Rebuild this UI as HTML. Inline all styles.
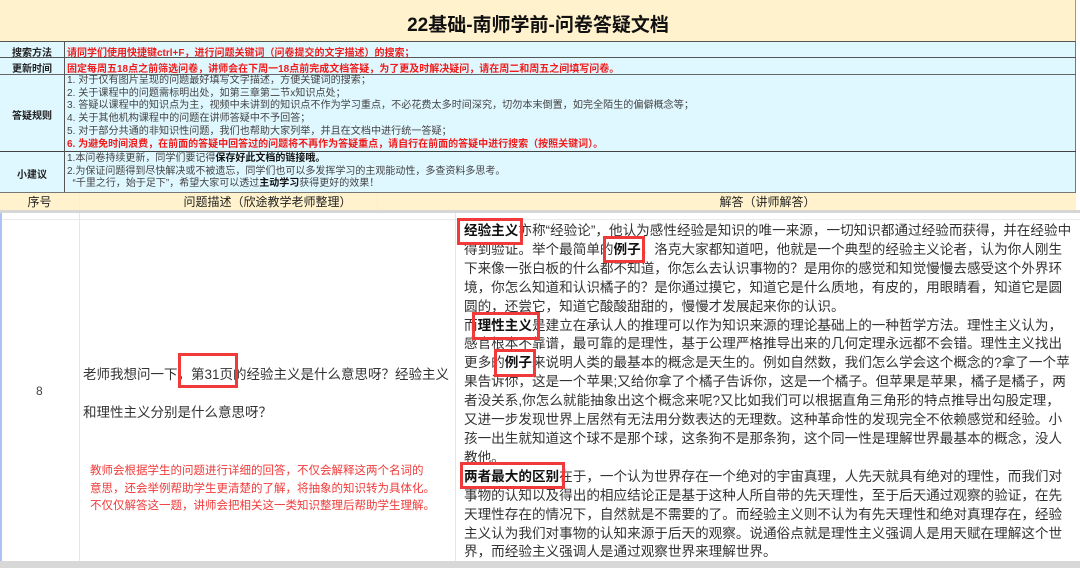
<!DOCTYPE html>
<html><head><meta charset="utf-8"><style>
*{margin:0;padding:0;box-sizing:border-box}
body{width:1080px;height:568px;overflow:hidden;background:#fff;font-family:"Liberation Sans","Noto Sans CJK SC",sans-serif;position:relative;color:#333}
.a{position:absolute;white-space:nowrap}
.lab{position:absolute;left:0;width:64px;text-align:center;font-size:10px;font-weight:bold;color:#222}
.red{color:#f01c1c;font-weight:bold;font-size:10px}
.g{font-size:10.1px;color:#444;line-height:12.7px}
.ans{position:absolute;left:464px;top:222px;font-size:13.6px;line-height:18.9px;color:#333;white-space:nowrap}
.box{position:absolute;border:3px solid #f03a3a}
b{color:#111}
</style></head><body>
<div class="a" style="left:0;top:0;width:1076px;height:41px;background:#fff2cc;border-right:1px solid #999"></div>
<div class="a" style="left:0;top:10px;width:1076px;text-align:center;font-size:19px;font-weight:bold;color:#111">22基础-南师学前-问卷答疑文档</div>
<div class="a" style="left:0;top:41px;width:1076px;height:151px;background:#dff7ff;border-top:1px solid #555;border-right:1px solid #777"></div>
<div class="a" style="left:0;top:57px;width:1076px;height:1px;background:#555"></div>
<div class="a" style="left:0;top:74px;width:1076px;height:1px;background:#666"></div>
<div class="a" style="left:0;top:151px;width:1076px;height:1px;background:#444"></div>
<div class="a" style="left:0;top:192px;width:1076px;height:1px;background:#777"></div>
<div class="a" style="left:64px;top:41px;width:1px;height:151px;background:#555"></div>
<div class="lab" style="top:44px">搜索方法</div>
<div class="lab" style="top:60px">更新时间</div>
<div class="lab" style="top:107px">答疑规则</div>
<div class="lab" style="top:166px">小建议</div>
<div class="a red" style="left:67px;top:44px">请同学们使用快捷键ctrl+F，进行问题关键词（问卷提交的文字描述）的搜索；</div>
<div class="a red" style="left:67px;top:60px">固定每周五18点之前筛选问卷，讲师会在下周一18点前完成文档答疑，为了更及时解决疑问，请在周二和周五之间填写问卷。</div>
<div class="a g" style="left:67px;top:75px">1. 对于仅有图片呈现的问题最好填写文字描述，方便关键词的搜索；<br>2. 关于课程中的问题需标明出处，如第三章第二节x知识点处；<br>3. 答疑以课程中的知识点为主，视频中未讲到的知识点不作为学习重点，不必花费太多时间深究，切勿本末倒置，如完全陌生的偏僻概念等；<br>4. 关于其他机构课程中的问题在讲师答疑中不予回答；<br>5. 对于部分共通的非知识性问题，我们也帮助大家列举，并且在文档中进行统一答疑；<br><span class="red">6. 为避免时间浪费，在前面的答疑中回答过的问题将不再作为答疑重点，请自行在前面的答疑中进行搜索（按照关键词）。</span></div>
<div class="a g" style="left:67px;top:153px;font-size:10px">1.本问卷持续更新，同学们要记得<b>保存好此文档的链接哦。</b><br>2.为保证问题得到尽快解决或不被遗忘，同学们也可以多发挥学习的主观能动性，多查资料多思考。<br>&nbsp;&nbsp;“千里之行，始于足下”，希望大家可以透过<b>主动学习</b>获得更好的效果！</div>
<div class="a" style="left:0;top:193px;width:1076px;height:17px;background:#fff2cc"></div>
<div class="a" style="left:79px;top:193px;width:1px;height:17px;background:#eee"></div>
<div class="a" style="left:377px;top:193px;width:1px;height:17px;background:#eee"></div>
<div class="a" style="left:0;top:193px;width:79px;text-align:center;font-size:12px;color:#222">序号</div>
<div class="a" style="left:80px;top:193px;width:375px;text-align:center;font-size:12px;color:#222">问题描述（欣途教学老师整理）</div>
<div class="a" style="left:455px;top:193px;width:625px;text-align:center;font-size:12px;color:#222">解答（讲师解答）</div>
<div class="a" style="left:0;top:210px;width:1080px;height:3px;background:#d6d6d6"></div>
<div class="a" style="left:0;top:219px;width:1080px;height:1px;background:#eaeaea"></div>
<div class="a" style="left:79px;top:213px;width:1px;height:355px;background:#e6e6e6"></div>
<div class="a" style="left:455px;top:213px;width:1px;height:355px;background:#e6e6e6"></div>
<div class="a" style="left:0;top:213px;width:2px;height:355px;background:#a9c4f0"></div>
<div class="a" style="left:36px;top:384px;font-size:12px;color:#444">8</div>
<div class="a" style="left:83px;top:363px;font-size:13.5px;color:#333">老师我想问一下，第31页的经验主义是什么意思呀？经验主义</div>
<div class="a" style="left:83px;top:401px;font-size:13.5px;color:#333">和理性主义分别是什么意思呀？</div>
<div class="box" style="left:178px;top:353px;width:60px;height:35px"></div>
<div class="a" style="left:90px;top:463px;font-size:11.5px;line-height:17.5px;color:#f03a3a">教师会根据学生的问题进行详细的回答，不仅会解释这两个名词的<br>意思，还会举例帮助学生更清楚的了解，将抽象的知识转为具体化。<br>不仅仅解答这一题，讲师会把相关这一类知识整理后帮助学生理解。</div>
<div class="ans"><b>经验主义</b>亦称“经验论”，他认为感性经验是知识的唯一来源，一切知识都通过经验而获得，并在经验中<br>得到验证。举个最简单的<b>例子</b>，洛克大家都知道吧，他就是一个典型的经验主义论者，认为你人刚生<br>下来像一张白板的什么都不知道，你怎么去认识事物的？是用你的感觉和知觉慢慢去感受这个外界环<br>境，你怎么知道和认识橘子的？是你通过摸它，知道它是什么质地，有皮的，用眼睛看，知道它是圆<br>圆的，还尝它，知道它酸酸甜甜的，慢慢才发展起来你的认识。<br>而<b>理性主义</b>是建立在承认人的推理可以作为知识来源的理论基础上的一种哲学方法。理性主义认为，<br>感官根本不靠谱，最可靠的是理性，基于公理严格推导出来的几何定理永远都不会错。理性主义找出<br>更多的<b>例子</b>来说明人类的最基本的概念是天生的。例如自然数，我们怎么学会这个概念的?拿了一个苹<br>果告诉你，这是一个苹果;又给你拿了个橘子告诉你，这是一个橘子。但苹果是苹果，橘子是橘子，两<br>者没关系,你怎么就能抽象出这个概念来呢?又比如我们可以根据直角三角形的特点推导出勾股定理，<br>又进一步发现世界上居然有无法用分数表达的无理数。这种革命性的发现完全不依赖感觉和经验。小<br>孩一出生就知道这个球不是那个球，这条狗不是那条狗，这个同一性是理解世界最基本的概念，没人<br>教他。<br><b>两者最大的区别</b>在于，一个认为世界存在一个绝对的宇宙真理，人先天就具有绝对的理性，而我们对<br>事物的认知以及得出的相应结论正是基于这种人所自带的先天理性，至于后天通过观察的验证，在先<br>天理性存在的情况下，自然就是不需要的了。而经验主义则不认为有先天理性和绝对真理存在，经验<br>主义认为我们对事物的认知来源于后天的观察。说通俗点就是理性主义强调人是用天赋在理解这个世<br>界，而经验主义强调人是通过观察世界来理解世界。</div>
<div class="box" style="left:457px;top:218px;width:66px;height:27px"></div>
<div class="box" style="left:603px;top:236px;width:42px;height:27px"></div>
<div class="box" style="left:472px;top:312px;width:68px;height:28px"></div>
<div class="box" style="left:494px;top:349px;width:42px;height:28px"></div>
<div class="box" style="left:460px;top:462px;width:105px;height:27px"></div>
<div class="a" style="left:0;top:561px;width:1080px;height:7px;background:#d8d8d8"></div>
</body></html>
